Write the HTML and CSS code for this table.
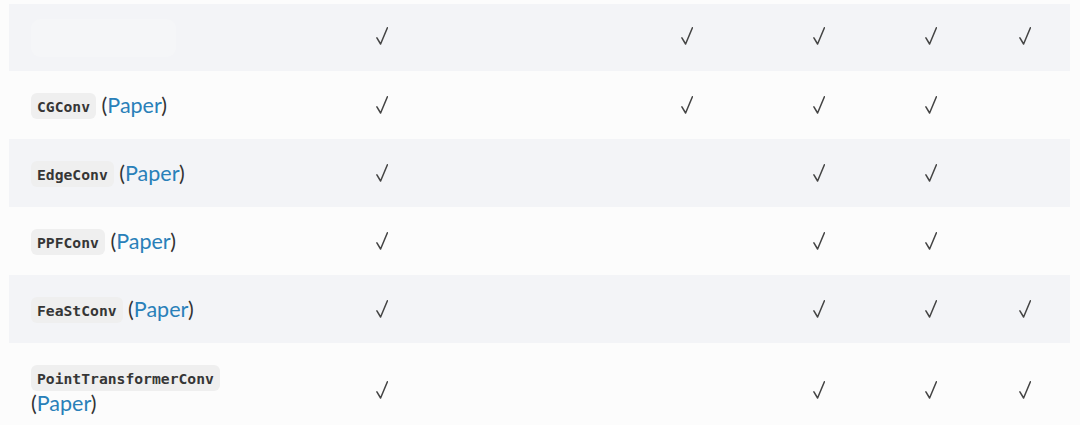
FILE: index.html
```html
<!DOCTYPE html>
<html lang="en">
<head>
<meta charset="utf-8">
<title>Conv operators</title>
<link rel="stylesheet" href="styles.css">
</head>
<body>
<svg class="defs" width="0" height="0" aria-hidden="true">
  <symbol id="tick" viewBox="0 0 12 18">
    <path d="M0.9 10.8 L4.6 17 L11.4 0.8" fill="none" stroke="currentColor" stroke-width="1.5" stroke-linecap="round" stroke-linejoin="round"/>
  </symbol>
</svg>
<table class="feat">
  <colgroup>
    <col class="c0"><col class="c1"><col class="c2"><col class="c3"><col class="c4"><col class="c5">
  </colgroup>
  <tbody>
    <tr class="odd first">
      <td class="name"><span class="ghost"></span></td>
      <td class="ck"><svg class="tick" role="img" aria-label="✓"><use href="#tick"/></svg></td>
      <td class="ck"><svg class="tick" role="img" aria-label="✓"><use href="#tick"/></svg></td>
      <td class="ck"><svg class="tick" role="img" aria-label="✓"><use href="#tick"/></svg></td>
      <td class="ck"><svg class="tick" role="img" aria-label="✓"><use href="#tick"/></svg></td>
      <td class="ck"><svg class="tick" role="img" aria-label="✓"><use href="#tick"/></svg></td>
    </tr>
    <tr>
      <td class="name"><code>CGConv</code> (<a href="#">Paper</a>)</td>
      <td class="ck"><svg class="tick" role="img" aria-label="✓"><use href="#tick"/></svg></td>
      <td class="ck"><svg class="tick" role="img" aria-label="✓"><use href="#tick"/></svg></td>
      <td class="ck"><svg class="tick" role="img" aria-label="✓"><use href="#tick"/></svg></td>
      <td class="ck"><svg class="tick" role="img" aria-label="✓"><use href="#tick"/></svg></td>
      <td class="ck"></td>
    </tr>
    <tr class="odd">
      <td class="name"><code>EdgeConv</code> (<a href="#">Paper</a>)</td>
      <td class="ck"><svg class="tick" role="img" aria-label="✓"><use href="#tick"/></svg></td>
      <td class="ck"></td>
      <td class="ck"><svg class="tick" role="img" aria-label="✓"><use href="#tick"/></svg></td>
      <td class="ck"><svg class="tick" role="img" aria-label="✓"><use href="#tick"/></svg></td>
      <td class="ck"></td>
    </tr>
    <tr>
      <td class="name"><code>PPFConv</code> (<a href="#">Paper</a>)</td>
      <td class="ck"><svg class="tick" role="img" aria-label="✓"><use href="#tick"/></svg></td>
      <td class="ck"></td>
      <td class="ck"><svg class="tick" role="img" aria-label="✓"><use href="#tick"/></svg></td>
      <td class="ck"><svg class="tick" role="img" aria-label="✓"><use href="#tick"/></svg></td>
      <td class="ck"></td>
    </tr>
    <tr class="odd">
      <td class="name"><code>FeaStConv</code> (<a href="#">Paper</a>)</td>
      <td class="ck"><svg class="tick" role="img" aria-label="✓"><use href="#tick"/></svg></td>
      <td class="ck"></td>
      <td class="ck"><svg class="tick" role="img" aria-label="✓"><use href="#tick"/></svg></td>
      <td class="ck"><svg class="tick" role="img" aria-label="✓"><use href="#tick"/></svg></td>
      <td class="ck"><svg class="tick" role="img" aria-label="✓"><use href="#tick"/></svg></td>
    </tr>
    <tr>
      <td class="name"><code>PointTransformerConv</code> (<a href="#">Paper</a>)</td>
      <td class="ck"><svg class="tick" role="img" aria-label="✓"><use href="#tick"/></svg></td>
      <td class="ck"></td>
      <td class="ck"><svg class="tick" role="img" aria-label="✓"><use href="#tick"/></svg></td>
      <td class="ck"><svg class="tick" role="img" aria-label="✓"><use href="#tick"/></svg></td>
      <td class="ck"><svg class="tick" role="img" aria-label="✓"><use href="#tick"/></svg></td>
    </tr>
  </tbody>
</table>
</body>
</html>
```

FILE: styles.css
```css
html, body {
  margin: 0;
  padding: 0;
  background: #fcfcfc;
}

body {
  font-family: Lato, "Liberation Sans", sans-serif;
  font-size: 21.5px;
  line-height: 26px;
  color: #333;
}

.defs {
  position: absolute;
  width: 0;
  height: 0;
  overflow: hidden;
}

.feat {
  margin: 4px 0 0 9px;
  width: 1061px;
  border-collapse: collapse;
  table-layout: fixed;
}

.c0 { width: 351px; }
.c1 { width: 305px; }
.c2 { width: 132px; }
.c3 { width: 112px; }
.c4 { width: 94px; }
.c5 { width: 67px; }

.feat td {
  height: 26px;
  padding: 21px 16px;
  vertical-align: middle;
  text-align: left;
  line-height: 26px;
}

.feat tr.first td {
  padding-top: 18px;
  padding-bottom: 20px;
}

.feat tr.odd td {
  background: #f3f4f7;
}

.feat td.name {
  padding-left: 22px;
  padding-right: 90px;
}

.feat td.ck {
  color: #444;
  line-height: 0;
}

.tick {
  display: inline-block;
  width: 12px;
  height: 18px;
  vertical-align: middle;
  color: #444;
}

code {
  font-family: "DejaVu Sans Mono", "Liberation Mono", monospace;
  font-size: 14.7px;
  line-height: 17px;
  font-weight: 700;
  color: #363636;
  background: #efefef;
  border-radius: 6px;
  padding: 4.5px 6px;
  vertical-align: 1px;
}

a {
  color: #2980b9;
  text-decoration: none;
}

.ghost {
  display: inline-block;
  vertical-align: middle;
  width: 133px;
  height: 26px;
  margin-left: 6px;
  border-radius: 4px;
  background: #f5f6f8;
  box-shadow: 0 0 0 6px #f5f6f8;
}
```
